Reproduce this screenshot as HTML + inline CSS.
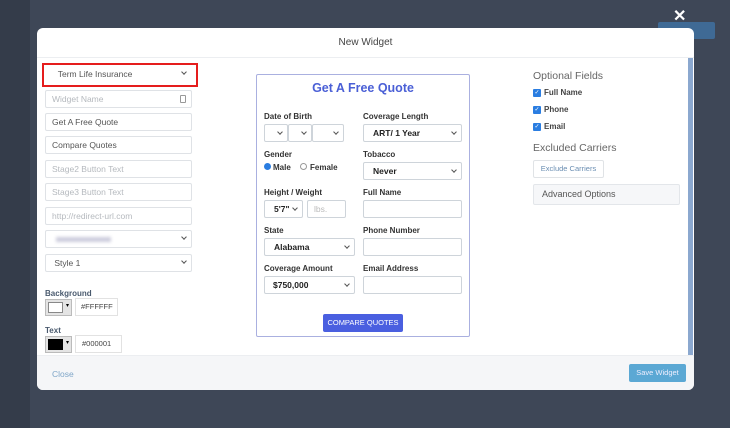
<!DOCTYPE html>
<html><head><style>
*{box-sizing:border-box;margin:0;padding:0}
body{width:730px;height:428px;background:#3e4757;font-family:"Liberation Sans",sans-serif;position:relative;overflow:hidden;font-size:8px}
.sb{position:absolute;left:0;top:0;width:30px;height:428px;background:#343c4a}
.a{position:absolute}
.modal{position:absolute;left:37px;top:28px;width:657px;height:362px;background:#fff;border-radius:6px;overflow:hidden}
.inp{position:absolute;left:8px;width:147px;height:18px;border:1px solid #dfe2e6;border-radius:2px;color:#555;padding-left:6px;line-height:16px;font-size:8.5px}
.ph{color:#b5b9be}
.chev{position:absolute;right:5px;top:4px;width:4px;height:4px;border-right:1.3px solid #555;border-bottom:1.3px solid #555;transform:rotate(45deg)}
.qb .chev{top:5px}
.lbl{position:absolute;font-size:8px;font-weight:bold;color:#333}
.fi{position:absolute;height:18px;border:1px solid #ced4da;border-radius:2px;font-size:8.5px;font-weight:bold;color:#222;padding-left:9px;line-height:16px;background:#fff}
.cb{position:absolute;left:496px;width:8px;height:8px;background:#2a7de1;border-radius:1px;color:#fff;font-size:6px;line-height:8px;text-align:center}
.cbt{position:absolute;left:507px;font-size:8px;font-weight:bold;color:#444}
</style></head><body>
<div class="sb"></div>
<div class="a" style="left:658px;top:22px;width:57px;height:17px;background:#3f6a95;border-radius:2px"></div>
<div class="a" style="left:673px;top:6px;color:#fff;font-size:16px;font-weight:bold">✕</div>
<div class="modal">
 <div class="a" style="left:0;top:0;width:657px;height:30px;border-bottom:1px solid #eceef1;text-align:center;line-height:30px;font-size:10px;color:#444">New Widget</div>
 <div class="a" style="left:0;top:327px;width:657px;height:35px;background:#f5f6f8;border-top:1px solid #eceef1"></div>
 <div class="a" style="left:15px;top:341px;color:#7fa6c8;font-size:8.5px">Close</div>
 <div class="a" style="left:592px;top:336px;width:57px;height:18px;background:#5ba8d4;border-radius:2px;color:#eef;font-size:7.5px;text-align:center;line-height:18px">Save Widget</div>
 <div class="a" style="left:651px;top:30px;width:5px;height:297px;background:#8ba8cf"></div>
 <div class="a" style="left:5px;top:35px;width:156px;height:24px;border:2px solid #e51d1d"></div>
 <div class="inp" style="top:38px;border:none;left:10px;width:144px">&nbsp;&nbsp;Term Life Insurance<span class="chev"></span></div>
 <div class="inp ph" style="top:62px">Widget Name<span class="a" style="right:5px;top:4px;width:6px;height:8px;border:1px solid #999;border-radius:1px"></span></div>
 <div class="inp" style="top:85px">Get A Free Quote</div>
 <div class="inp" style="top:108px">Compare Quotes</div>
 <div class="inp ph" style="top:132px">Stage2 Button Text</div>
 <div class="inp ph" style="top:155px">Stage3 Button Text</div>
 <div class="inp ph" style="top:179px">http://redirect-url.com</div>
 <div class="inp" style="top:202px"><span class="a" style="left:10px;top:6px;width:55px;height:5px;background:#ccd;filter:blur(1.5px)"></span><span class="chev"></span></div>
 <div class="inp" style="top:226px">&nbsp;Style 1<span class="chev"></span></div>
 <div class="a" style="left:8px;top:261px;font-size:8px;font-weight:bold;color:#4a5a6e">Background</div>
 <div class="a" style="left:8px;top:271px;width:27px;height:17px;background:#e4e4e4;border:1px solid #bbb"><div class="a" style="left:2px;top:2px;width:15px;height:11px;background:#fff;border:1px solid #888"></div><div class="a" style="left:20px;top:2px;font-size:6px">▾</div></div>
 <div class="a" style="left:38px;top:270px;width:43px;height:18px;border:1px solid #e2e2e2;font-size:7.5px;color:#444;line-height:16px;padding-left:5px">#FFFFFF</div>
 <div class="a" style="left:8px;top:298px;font-size:8px;font-weight:bold;color:#4a5a6e">Text</div>
 <div class="a" style="left:8px;top:308px;width:27px;height:17px;background:#e4e4e4;border:1px solid #bbb"><div class="a" style="left:2px;top:2px;width:15px;height:11px;background:#000"></div><div class="a" style="left:20px;top:2px;font-size:6px">▾</div></div>
 <div class="a" style="left:38px;top:307px;width:47px;height:18px;border:1px solid #e2e2e2;font-size:7.5px;color:#444;line-height:16px;padding-left:6px">#000001</div>

 <div class="qb a" style="left:219px;top:46px;width:214px;height:263px;border:1px solid #aab0e0;border-radius:2px">
  <div class="a" style="left:0;top:6px;width:212px;text-align:center;font-size:12.5px;font-weight:bold;color:#4a5fd6">Get A Free Quote</div>
  <div class="lbl" style="left:7px;top:37px">Date of Birth</div>
  <div class="fi" style="left:7px;top:49px;width:24px"><span class="chev"></span></div>
  <div class="fi" style="left:31px;top:49px;width:24px"><span class="chev"></span></div>
  <div class="fi" style="left:55px;top:49px;width:32px"><span class="chev"></span></div>
  <div class="lbl" style="left:7px;top:75px">Gender</div>
  <div class="a" style="left:7px;top:88px;width:7px;height:7px;border-radius:50%;background:#2a7de1"></div>
  <div class="lbl" style="left:16px;top:88px">Male</div>
  <div class="a" style="left:43px;top:88px;width:7px;height:7px;border-radius:50%;border:1px solid #999"></div>
  <div class="lbl" style="left:53px;top:88px">Female</div>
  <div class="lbl" style="left:7px;top:113px">Height / Weight</div>
  <div class="fi" style="left:7px;top:125px;width:39px">5'7"<span class="chev"></span></div>
  <div class="fi" style="left:50px;top:125px;width:39px;color:#bbb;font-weight:normal;padding-left:6px">lbs.</div>
  <div class="lbl" style="left:7px;top:151px">State</div>
  <div class="fi" style="left:7px;top:163px;width:91px">Alabama<span class="chev"></span></div>
  <div class="lbl" style="left:7px;top:189px">Coverage Amount</div>
  <div class="fi" style="left:7px;top:201px;width:91px;padding-left:8px">$750,000<span class="chev"></span></div>
  <div class="lbl" style="left:106px;top:37px">Coverage Length</div>
  <div class="fi" style="left:106px;top:49px;width:99px">ART/ 1 Year<span class="chev"></span></div>
  <div class="lbl" style="left:106px;top:75px">Tobacco</div>
  <div class="fi" style="left:106px;top:87px;width:99px">Never<span class="chev"></span></div>
  <div class="lbl" style="left:106px;top:113px">Full Name</div>
  <div class="fi" style="left:106px;top:125px;width:99px"></div>
  <div class="lbl" style="left:106px;top:151px">Phone Number</div>
  <div class="fi" style="left:106px;top:163px;width:99px"></div>
  <div class="lbl" style="left:106px;top:189px">Email Address</div>
  <div class="fi" style="left:106px;top:201px;width:99px"></div>
  <div class="a" style="left:66px;top:239px;width:80px;height:18px;background:#4a5fe0;border-radius:2px;color:#fff;font-size:7.5px;text-align:center;line-height:18px">COMPARE QUOTES</div>
 </div>

 <div class="a" style="left:496px;top:42px;font-size:10.5px;color:#666">Optional Fields</div>
 <div class="cb" style="top:61px">✓</div><div class="cbt" style="top:60px">Full Name</div>
 <div class="cb" style="top:78px">✓</div><div class="cbt" style="top:77px">Phone</div>
 <div class="cb" style="top:95px">✓</div><div class="cbt" style="top:94px">Email</div>
 <div class="a" style="left:496px;top:114px;font-size:10.5px;color:#666">Excluded Carriers</div>
 <div class="a" style="left:496px;top:132px;width:71px;height:18px;border:1px solid #e0e3e6;border-radius:2px;color:#6b8fb3;font-size:7.5px;text-align:center;line-height:16px">Exclude Carriers</div>
 <div class="a" style="left:496px;top:156px;width:147px;height:21px;background:#f6f7f9;border:1px solid #e3e6ea;border-radius:2px;color:#555;font-size:9px;line-height:19px;padding-left:8px">Advanced Options</div>
</div>
</body></html>
